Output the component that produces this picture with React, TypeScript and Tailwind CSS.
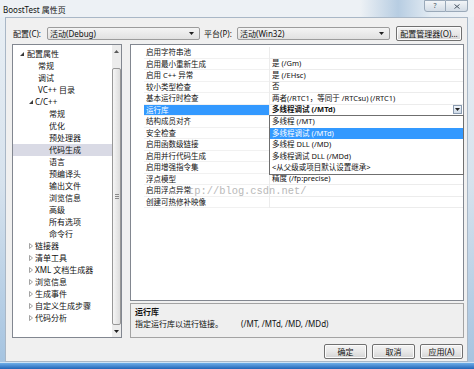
import type { ReactNode } from 'react'
import clsx from 'clsx'

type TreeItem = { label: string; level: 0 | 1 | 2; arrow?: 'open' | 'closed'; selected?: boolean }

const TREE: TreeItem[] = [
  { label: '配置属性', level: 0, arrow: 'open' },
  { label: '常规', level: 1 },
  { label: '调试', level: 1 },
  { label: 'VC++ 目录', level: 1 },
  { label: 'C/C++', level: 1, arrow: 'open' },
  { label: '常规', level: 2 },
  { label: '优化', level: 2 },
  { label: '预处理器', level: 2 },
  { label: '代码生成', level: 2, selected: true },
  { label: '语言', level: 2 },
  { label: '预编译头', level: 2 },
  { label: '输出文件', level: 2 },
  { label: '浏览信息', level: 2 },
  { label: '高级', level: 2 },
  { label: '所有选项', level: 2 },
  { label: '命令行', level: 2 },
  { label: '链接器', level: 1, arrow: 'closed' },
  { label: '清单工具', level: 1, arrow: 'closed' },
  { label: 'XML 文档生成器', level: 1, arrow: 'closed' },
  { label: '浏览信息', level: 1, arrow: 'closed' },
  { label: '生成事件', level: 1, arrow: 'closed' },
  { label: '自定义生成步骤', level: 1, arrow: 'closed' },
  { label: '代码分析', level: 1, arrow: 'closed' },
]

const PROPS: { name: string; value: string; selected?: boolean }[] = [
  { name: '启用字符串池', value: '' },
  { name: '启用最小重新生成', value: '是 (/Gm)' },
  { name: '启用 C++ 异常', value: '是 (/EHsc)' },
  { name: '较小类型检查', value: '否' },
  { name: '基本运行时检查', value: '两者(/RTC1，等同于 /RTCsu) (/RTC1)' },
  { name: '运行库', value: '多线程调试 (/MTd)', selected: true },
  { name: '结构成员对齐', value: '' },
  { name: '安全检查', value: '' },
  { name: '启用函数级链接', value: '' },
  { name: '启用并行代码生成', value: '' },
  { name: '启用增强指令集', value: '' },
  { name: '浮点模型', value: '精度 (/fp:precise)' },
  { name: '启用浮点异常', value: '' },
  { name: '创建可热修补映像', value: '' },
]

const RUNTIME_OPTIONS = [
  '多线程 (/MT)',
  '多线程调试 (/MTd)',
  '多线程 DLL (/MD)',
  '多线程调试 DLL (/MDd)',
  '<从父级或项目默认设置继承>',
]

function DownTriangle({ className }: { className?: string }) {
  return (
    <svg width="5" height="3" viewBox="0 0 5 3" className={className}>
      <path d="M0 0 L5 0 L2.5 3 Z" fill="#202020" />
    </svg>
  )
}

function ComboBox({ text }: { text: string }) {
  return (
    <div className="flex h-[13px] w-[153px] items-center justify-between rounded-[2px] border border-[#9c9c9c] bg-gradient-to-b from-[#f4f4f4] to-[#e1e1e1] pl-[2px] pr-[5px]">
      <span className="leading-[11px] whitespace-nowrap">{text}</span>
      <DownTriangle />
    </div>
  )
}

function WinButton({ children, className }: { children: ReactNode; className?: string }) {
  return (
    <div
      className={clsx(
        'flex h-[15px] items-center justify-center rounded-[2px] border border-[#707070] bg-gradient-to-b from-[#f3f3f3] via-[#e8e8e8] to-[#d4d4d4] leading-[11px] whitespace-nowrap shadow-[inset_0_0_0_1px_#fbfbfb]',
        className
      )}
    >
      {children}
    </div>
  )
}

function CaptionButton({ children }: { children: ReactNode }) {
  return (
    <div className="flex h-[12px] w-[22px] items-center justify-center border border-[#9aa9b9] bg-gradient-to-b from-[#f2f5f8] to-[#d3dce6] text-[7px] leading-[8px] text-[#4b5866] first:rounded-bl-[3px] last:rounded-br-[3px] last:border-l-0">
      {children}
    </div>
  )
}

function TreeArrow({ kind }: { kind: 'open' | 'closed' }) {
  if (kind === 'open') {
    return (
      <svg width="4" height="4" viewBox="0 0 4 4">
        <path d="M4 0 L4 4 L0 4 Z" fill="#3a3a3a" />
      </svg>
    )
  }
  return (
    <svg width="4" height="6" viewBox="0 0 4 6">
      <path d="M0.5 0.5 L3.5 3 L0.5 5.5 Z" fill="none" stroke="#8c8c8c" strokeWidth="0.8" />
    </svg>
  )
}

function TreeRow({ item }: { item: TreeItem }) {
  // arrow column sits a few px before the text, leaf items keep the text column only
  const pad =
    item.level === 0 ? 'pl-[7px]' : item.level === 2 ? 'pl-[36px]' : item.arrow ? 'pl-[16px]' : 'pl-[25px]'
  return (
    <div
      className={clsx(
        'flex h-[12px] items-center leading-[12px] whitespace-nowrap',
        pad,
        item.selected && 'bg-[#d9dae5]'
      )}
    >
      {item.arrow && (
        <span className={clsx('flex items-center', item.level === 0 ? 'w-[7px]' : 'w-[6px]')}>
          <TreeArrow kind={item.arrow} />
        </span>
      )}
      <span>{item.label}</span>
    </div>
  )
}

function TreeScrollBar() {
  return (
    <div className="flex h-full w-[9px] flex-col bg-[#ececec]">
      <div className="flex h-[12px] items-center justify-center">
        <svg width="5" height="3" viewBox="0 0 5 3">
          <path d="M0 3 L5 3 L2.5 0 Z" fill="#5a5a5a" />
        </svg>
      </div>
      <div className="h-[11px]" />
      <div className="flex flex-1 items-center justify-center rounded-[2px] border border-[#979797] bg-gradient-to-r from-[#f6f6f6] to-[#dcdcdc]">
        <div className="flex flex-col gap-[1px]">
          <div className="h-px w-[4px] bg-[#8a8a8a]" />
          <div className="h-px w-[4px] bg-[#8a8a8a]" />
          <div className="h-px w-[4px] bg-[#8a8a8a]" />
        </div>
      </div>
      <div className="h-[1px]" />
      <div className="flex h-[11px] items-center justify-center">
        <DownTriangle />
      </div>
    </div>
  )
}

export default function App() {
  return (
    <div className="relative flex h-[369px] w-[474px] flex-col overflow-hidden bg-gradient-to-b from-[#eaf0f5] via-[#d6e2ed] to-[#a4c3e0] font-['Noto_Sans','Noto_Sans_CJK_SC',sans-serif] text-[8px] text-[#111]">
      {/* Title bar */}
      <div className="flex h-[17px] shrink-0 bg-[linear-gradient(90deg,#edf1f5_0%,#edf1f5_76%,#b7cde2_84%,#e4ecf3_91%,#edf1f5_100%)]">
        <span className="pl-[3px] pt-[4px] leading-[12px] whitespace-nowrap">BoostTest 属性页</span>
        <div className="ml-auto mr-[6px] flex h-[12px]">
          <CaptionButton>?</CaptionButton>
          <CaptionButton>
            <svg width="6" height="5" viewBox="0 0 6 5">
              <path d="M0.5 0.5 L5.5 4.5 M5.5 0.5 L0.5 4.5" stroke="#4b5866" strokeWidth="1" />
            </svg>
          </CaptionButton>
        </div>
      </div>

      {/* Client area */}
      <div className="ml-[5px] mr-[6px] flex flex-1 flex-col border border-[#a9b7c6] bg-[#f0f0f0] pb-[2px]">
        {/* Configuration row */}
        <div className="mt-[8px] flex h-[15px] items-center pl-[7px]">
          <span className="w-[34px] leading-[11px] whitespace-nowrap">配置(C):</span>
          <ComboBox text="活动(Debug)" />
          <span className="ml-[4px] w-[33px] leading-[11px] whitespace-nowrap">平台(P):</span>
          <ComboBox text="活动(Win32)" />
          <WinButton className="ml-[6px] w-[66px]">配置管理器(O)...</WinButton>
        </div>

        {/* Tree + property grid */}
        <div className="mt-[3px] flex h-[294px] pl-[6px]">
          <div className="flex h-full w-[110px] border border-[#828790] bg-white">
            <div className="flex-1 overflow-hidden pt-[3px]">
              {TREE.map((item, i) => (
                <TreeRow key={i} item={item} />
              ))}
            </div>
            <TreeScrollBar />
          </div>

          <div className="ml-[8px] flex w-[334px] flex-col">
            <div className="relative h-[257px] border border-[#828790] bg-white text-[7.5px]">
              <div className="pt-[2px]">
                {PROPS.map((p, i) => (
                  <div key={i} className="flex h-[11.5px] leading-[11px]">
                    <div className="w-[13px] shrink-0" />
                    <div
                      className={clsx(
                        'w-[125px] shrink-0 border-b border-[#f1f1f1] pl-[2px] whitespace-nowrap',
                        p.selected && 'border-[#3399ff] bg-[#3399ff] text-white'
                      )}
                    >
                      {p.name}
                    </div>
                    <div className="relative flex min-w-0 flex-1 items-center justify-between border-b border-l border-[#ececec] pl-[2px] pr-[1px] whitespace-nowrap">
                      <span className={clsx(p.selected && 'font-bold')}>{p.value}</span>
                      {p.selected && (
                        <>
                          <div className="flex h-[9px] w-[9px] items-center justify-center border border-[#8a9bb0] bg-gradient-to-b from-[#f1f5fa] to-[#cfdbe8]">
                            <DownTriangle />
                          </div>
                          {/* open drop-down list */}
                          <div className="absolute left-[-1px] top-full z-10 w-[195px] border border-[#6f6f6f] bg-white">
                            {RUNTIME_OPTIONS.map((o, j) => (
                              <div
                                key={o}
                                className={clsx(
                                  'h-[11.5px] pl-[2px] leading-[11.5px] font-normal',
                                  j === 1 && 'bg-[#3399ff] text-white'
                                )}
                              >
                                {o}
                              </div>
                            ))}
                          </div>
                        </>
                      )}
                    </div>
                  </div>
                ))}
              </div>
              <span className="pointer-events-none absolute left-[57px] top-[140px] font-['Liberation_Mono',monospace] text-[10.4px] leading-[12px] text-[#a8a8a8] opacity-80">
                tp://blog.csdn.net/
              </span>
            </div>

            <div className="mt-[2px] h-[35px] border border-[#a3a3a3] bg-[#efefef] px-[4px] pt-[2px] leading-[11.5px]">
              <div className="font-bold">运行库</div>
              <div className="flex whitespace-nowrap">
                <span className="w-[106px]">指定运行库以进行链接。</span>
                <span>(/MT, /MTd, /MD, /MDd)</span>
              </div>
            </div>
          </div>
        </div>

        {/* Dialog buttons */}
        <div className="mt-[6px] flex justify-end gap-[5px] pr-[4px]">
          <WinButton className="w-[43px]">确定</WinButton>
          <WinButton className="w-[43px]">取消</WinButton>
          <WinButton className="w-[43px]">应用(A)</WinButton>
        </div>
      </div>

      {/* bottom window frame */}
      <div className="h-[7px] shrink-0 border-t border-[#cfe3f5] bg-gradient-to-b from-[#6eaee8] to-[#2165b8]" />
    </div>
  )
}
